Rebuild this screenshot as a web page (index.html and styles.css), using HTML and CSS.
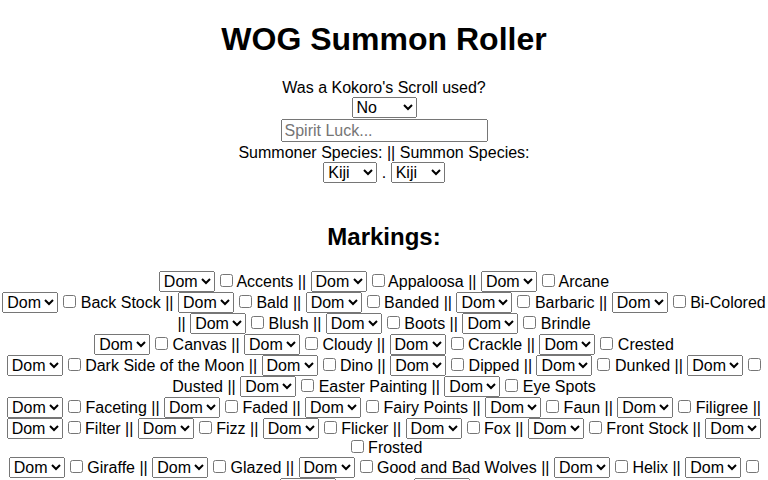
FILE: index.html
```html
<!DOCTYPE html>
<html>
<head>
<meta charset="utf-8">
<title>WOG Summon Roller</title>
<link rel="stylesheet" href="styles.css">
</head>
<body class="page">
<h1 class="title">WOG Summon Roller</h1>
<p class="setup">Was a Kokoro's Scroll used?<br>
<select class="field scroll"><option>No</option><option>Yes</option></select><br>
<input class="field luck" type="text" placeholder="Spirit Luck..."><br>
Summoner Species: || Summon Species:<br>
<select class="field species"><option>Kiji</option></select> . <select class="field species"><option>Kiji</option></select>
</p>
<h2 class="heading">Markings:</h2>
<div class="markings">
<select class="field"><option>Dom</option><option>Rec</option></select><input type="checkbox" class="box"> Accents || <select class="field"><option>Dom</option><option>Rec</option></select><input type="checkbox" class="box"> Appaloosa || <select class="field"><option>Dom</option><option>Rec</option></select><input type="checkbox" class="box"> Arcane<br>
<select class="field"><option>Dom</option><option>Rec</option></select><input type="checkbox" class="box"> Back Stock || <select class="field"><option>Dom</option><option>Rec</option></select><input type="checkbox" class="box"> Bald || <select class="field"><option>Dom</option><option>Rec</option></select><input type="checkbox" class="box"> Banded || <select class="field"><option>Dom</option><option>Rec</option></select><input type="checkbox" class="box"> Barbaric || <select class="field"><option>Dom</option><option>Rec</option></select><input type="checkbox" class="box"> Bi-Colored || <select class="field"><option>Dom</option><option>Rec</option></select><input type="checkbox" class="box"> Blush || <select class="field"><option>Dom</option><option>Rec</option></select><input type="checkbox" class="box"> Boots || <select class="field"><option>Dom</option><option>Rec</option></select><input type="checkbox" class="box"> Brindle<br>
<select class="field"><option>Dom</option><option>Rec</option></select><input type="checkbox" class="box"> Canvas || <select class="field"><option>Dom</option><option>Rec</option></select><input type="checkbox" class="box"> Cloudy || <select class="field"><option>Dom</option><option>Rec</option></select><input type="checkbox" class="box"> Crackle || <select class="field"><option>Dom</option><option>Rec</option></select><input type="checkbox" class="box"> Crested<br>
<select class="field"><option>Dom</option><option>Rec</option></select><input type="checkbox" class="box"> Dark Side of the Moon || <select class="field"><option>Dom</option><option>Rec</option></select><input type="checkbox" class="box"> Dino || <select class="field"><option>Dom</option><option>Rec</option></select><input type="checkbox" class="box"> Dipped || <select class="field"><option>Dom</option><option>Rec</option></select><input type="checkbox" class="box"> Dunked || <select class="field"><option>Dom</option><option>Rec</option></select><input type="checkbox" class="box"> Dusted || <select class="field"><option>Dom</option><option>Rec</option></select><input type="checkbox" class="box"> Easter Painting || <select class="field"><option>Dom</option><option>Rec</option></select><input type="checkbox" class="box"> Eye Spots<br>
<select class="field"><option>Dom</option><option>Rec</option></select><input type="checkbox" class="box"> Faceting || <select class="field"><option>Dom</option><option>Rec</option></select><input type="checkbox" class="box"> Faded || <select class="field"><option>Dom</option><option>Rec</option></select><input type="checkbox" class="box"> Fairy Points || <select class="field"><option>Dom</option><option>Rec</option></select><input type="checkbox" class="box"> Faun || <select class="field"><option>Dom</option><option>Rec</option></select><input type="checkbox" class="box"> Filigree || <select class="field"><option>Dom</option><option>Rec</option></select><input type="checkbox" class="box"> Filter || <select class="field"><option>Dom</option><option>Rec</option></select><input type="checkbox" class="box"> Fizz || <select class="field"><option>Dom</option><option>Rec</option></select><input type="checkbox" class="box"> Flicker || <select class="field"><option>Dom</option><option>Rec</option></select><input type="checkbox" class="box"> Fox || <select class="field"><option>Dom</option><option>Rec</option></select><input type="checkbox" class="box"> Front Stock || <select class="field"><option>Dom</option><option>Rec</option></select><input type="checkbox" class="box"> Frosted<br>
<select class="field"><option>Dom</option><option>Rec</option></select><input type="checkbox" class="box"> Giraffe || <select class="field"><option>Dom</option><option>Rec</option></select><input type="checkbox" class="box"> Glazed || <select class="field"><option>Dom</option><option>Rec</option></select><input type="checkbox" class="box"> Good and Bad Wolves || <select class="field"><option>Dom</option><option>Rec</option></select><input type="checkbox" class="box"> Helix || <select class="field"><option>Dom</option><option>Rec</option></select><input type="checkbox" class="box"> Holly || <select class="field"><option>Dom</option><option>Rec</option></select><input type="checkbox" class="box"> Hood || <select class="field"><option>Dom</option><option>Rec</option></select><input type="checkbox" class="box"> Inkwell<br>
</div>
</body>
</html>
```
FILE: styles.css
```css
html {
  margin: 0;
  padding: 0;
}
.page {
  margin: 0;
  padding: 0;
  font-family: "Liberation Sans", Arial, sans-serif;
  font-size: 16px;
  text-align: center;
  color: #000;
  background: #fff;
}
.title {
  font-size: 32px;
  font-weight: bold;
  margin: 21px 0;
}
.setup {
  margin: 0;
  padding-bottom: 20px;
}
.heading {
  font-size: 24px;
  font-weight: bold;
  margin: 20px 0;
}
.field {
  font-family: inherit;
  font-size: 16px;
}
.scroll {
  width: 65px;
}
.species {
  width: 54px;
}
.luck {
  width: 207px;
  height: 23px;
  box-sizing: border-box;
  margin: 1px 0 2px;
}
.box {
  margin: 1px 0 3px 5px;
}
.markings {
  line-height: normal;
}
```
